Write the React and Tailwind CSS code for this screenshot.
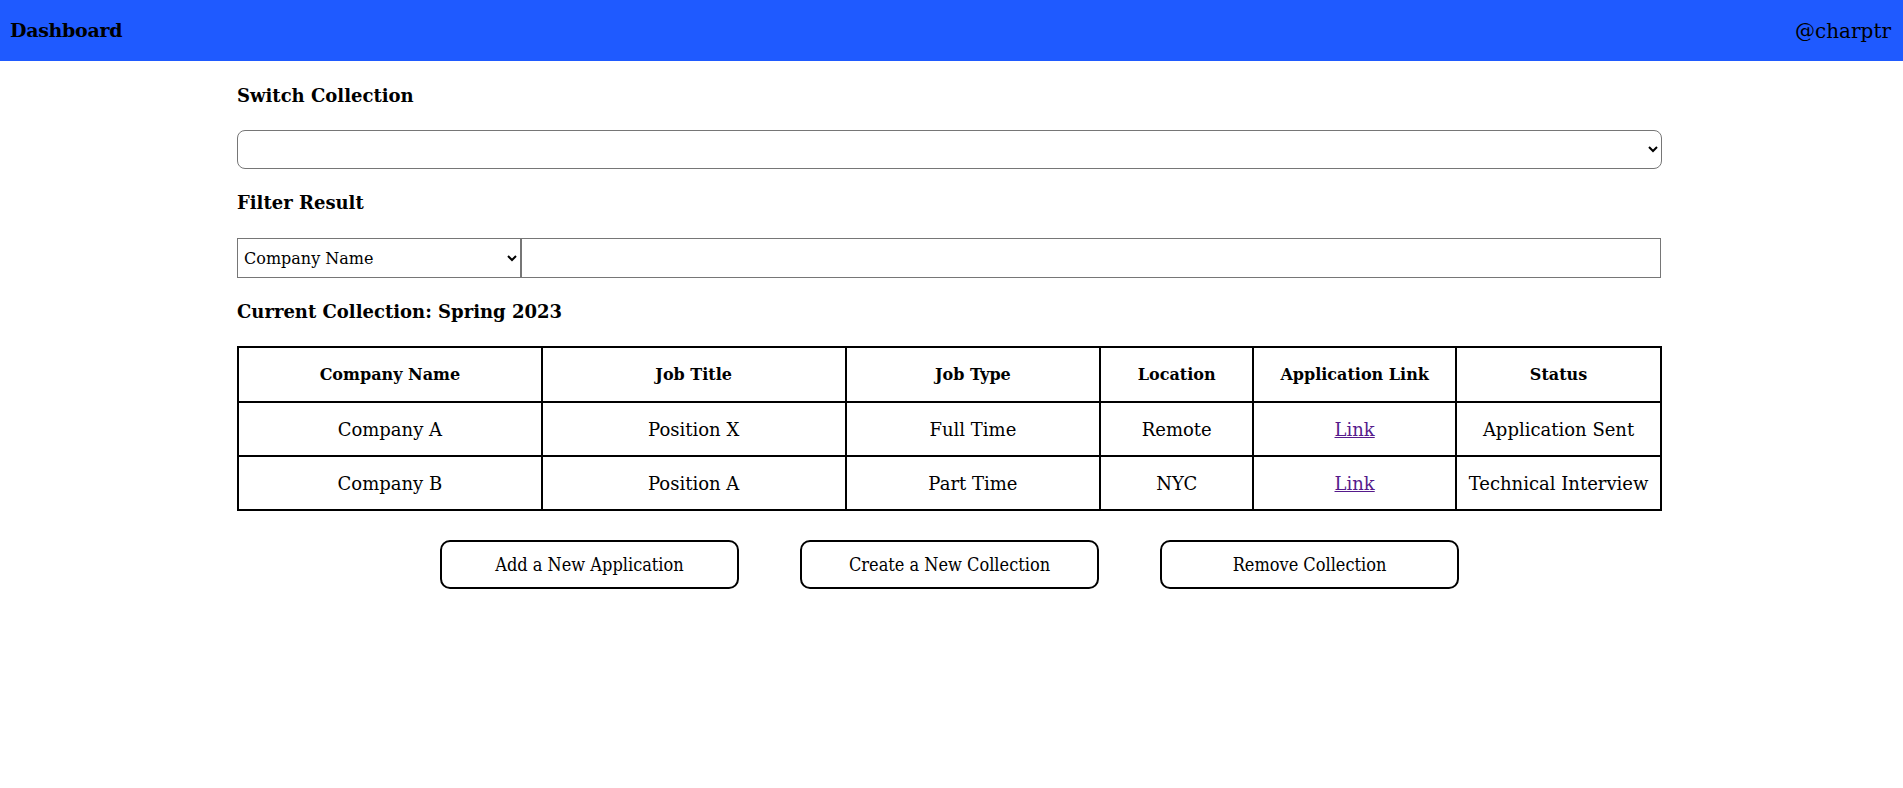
import React from "react";

export default function App() {
  const rows = [
    ["Company A", "Position X", "Full Time", "Remote", "Application Sent"],
    ["Company B", "Position A", "Part Time", "NYC", "Technical Interview"],
  ];
  const heads = ["Company Name", "Job Title", "Job Type", "Location", "Application Link", "Status"];
  const widths = ["w-[304px]", "w-[304px]", "w-[255px]", "w-[153px]", "w-[203px]", "w-[205px]"];
  return (
    <div className="min-h-[788px] bg-white text-black font-['DejaVu_Serif',serif]">
      <header className="h-[61px] bg-[#1f5aff] flex items-center justify-between pl-[10px] pr-[12px]">
        <span className="text-[19px] font-bold tracking-[-0.3px]">Dashboard</span>
        <span className="text-[20px]">@charptr</span>
      </header>
      <main className="w-[1425px] ml-[237px] pt-[23px]">
        <h2 className="text-[18px] font-bold h-[24px] leading-[24px]">Switch Collection</h2>
        <select className="mt-[22px] w-full h-[39px] border border-[#767676] rounded-[8px] bg-white text-[14px] px-1"></select>
        <h2 className="mt-[22px] text-[18px] font-bold h-[24px] leading-[24px]">Filter Result</h2>
        <div className="mt-[23px] flex h-[40px]">
          <select className="w-[284px] h-full border border-[#767676] bg-white text-[16px] px-[2px]">
            <option>Company Name</option>
          </select>
          <input className="flex-1 h-full border border-[#767676] mr-[1px]" />
        </div>
        <h2 className="mt-[22px] text-[18px] font-bold h-[24px] leading-[24px]">Current Collection: Spring 2023</h2>
        <table className="mt-[22px] w-full border-collapse border-2 border-black text-[18px]">
          <thead>
            <tr className="h-[55px]">
              {heads.map((h, i) => (
                <th key={h} className={`${widths[i]} border-2 border-black font-bold text-[16px] text-center`}>{h}</th>
              ))}
            </tr>
          </thead>
          <tbody>
            {rows.map((r) => (
              <tr key={r[0]} className="h-[54px]">
                <td className="border-2 border-black text-center">{r[0]}</td>
                <td className="border-2 border-black text-center">{r[1]}</td>
                <td className="border-2 border-black text-center">{r[2]}</td>
                <td className="border-2 border-black text-center">{r[3]}</td>
                <td className="border-2 border-black text-center">
                  <a href="#" className="underline text-[#551a8b]">Link</a>
                </td>
                <td className="border-2 border-black text-center">{r[4]}</td>
              </tr>
            ))}
          </tbody>
        </table>
        <div className="mt-[29px] flex justify-center gap-[61px]">
          {["Add a New Application", "Create a New Collection", "Remove Collection"].map((b) => (
            <button key={b} className="w-[299px] h-[49px] border-2 border-black rounded-[10px] bg-white text-[18px] font-stretch-condensed">
              {b}
            </button>
          ))}
        </div>
      </main>
    </div>
  );
}
